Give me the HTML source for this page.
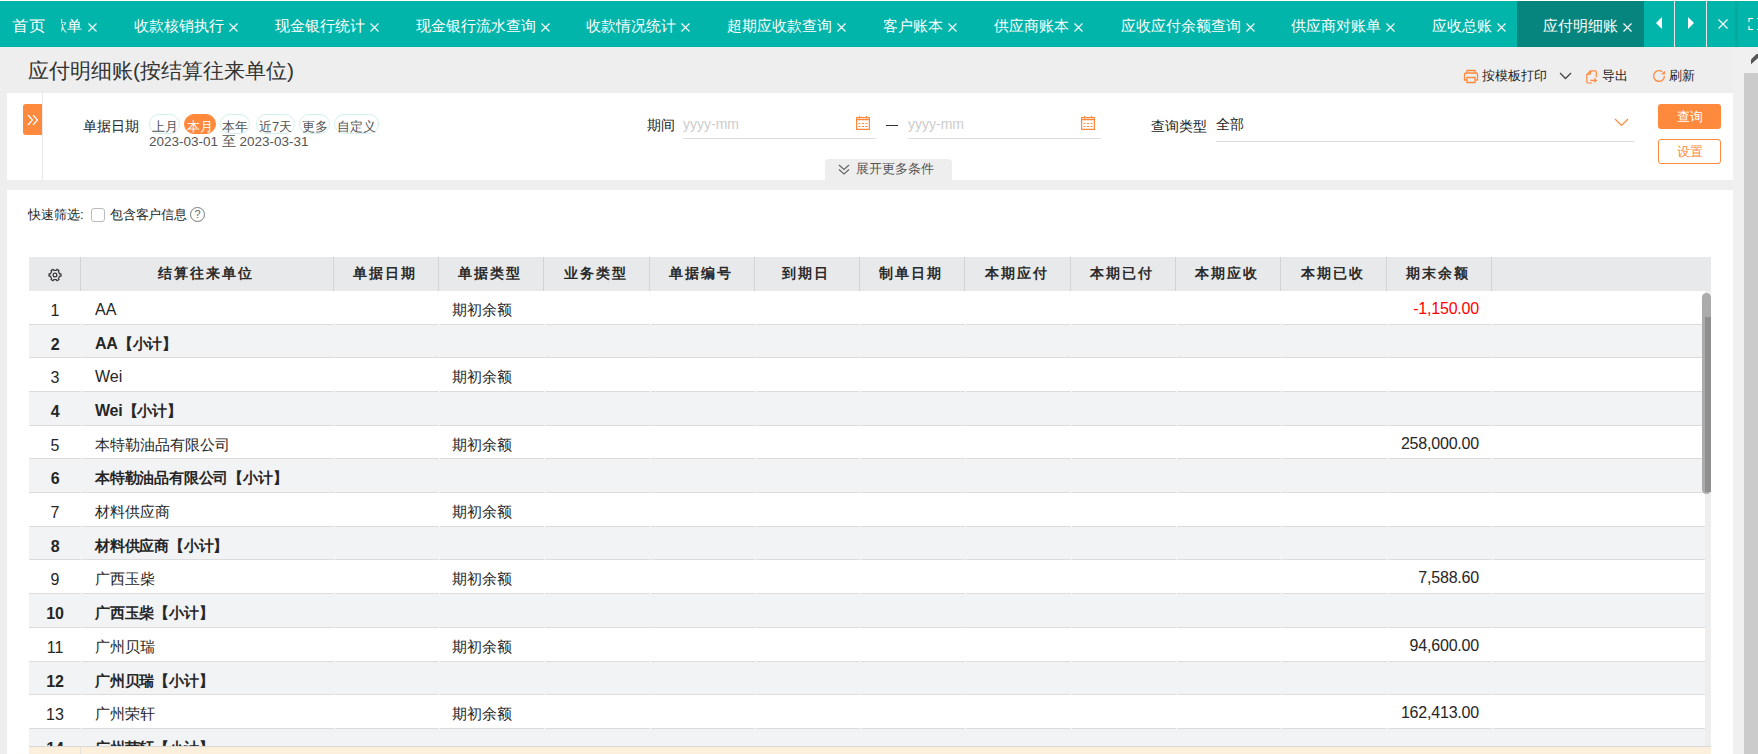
<!DOCTYPE html>
<html><head><meta charset="utf-8">
<style>
*{box-sizing:border-box;margin:0;padding:0}
html,body{width:1758px;height:754px;overflow:hidden;background:#eeeeee;font-family:"Liberation Sans",sans-serif;color:#333}
div,span{position:absolute;white-space:nowrap}
svg{display:block}
#tabs{left:0;top:0;width:1758px;height:47px;background:#01b5ab;border-top:1px solid #ffffff}
.t{top:1px;height:47px;line-height:47px;color:#fff;font-size:15px}
.x{top:21.5px;width:9px;height:9px;line-height:0}
#title{left:28px;top:57px;font-size:21px;color:#333}
.panel{background:#fff}
.l13{font-size:13px;color:#222;line-height:16px}
.l14{font-size:14px;color:#222;line-height:17px}
.pill{top:114px;height:20px;border:1px solid #d3f0ee;border-radius:10px;font-size:13px;line-height:23px;color:#555;text-align:center}
.th{height:34px;line-height:32px;font-size:14px;font-weight:bold;letter-spacing:2px;text-align:center;color:#2a2a2a}
.row{left:0;width:1676px;height:33.67px}
.td{top:0;line-height:38px;font-size:15px;color:#262626;border-bottom:1px solid #dcdcdc}
</style></head><body>
<div id="tabs">
<div style="left:1517px;top:0;width:127px;height:46px;background:#05857e"></div>
<div class="t" style="left:12px;transform:scaleX(1.1);transform-origin:0 0">首页</div>
<div class="t" style="left:134px">收款核销执行</div>
<div class="x" style="left:228.5px"><svg width="9" height="9" viewBox="0 0 9 9" style="display:block"><path d="M0.5 0.5L8.5 8.5M8.5 0.5L0.5 8.5" stroke="#fff" stroke-width="1.1" fill="none"/></svg></div>
<div class="t" style="left:275px">现金银行统计</div>
<div class="x" style="left:369.5px"><svg width="9" height="9" viewBox="0 0 9 9" style="display:block"><path d="M0.5 0.5L8.5 8.5M8.5 0.5L0.5 8.5" stroke="#fff" stroke-width="1.1" fill="none"/></svg></div>
<div class="t" style="left:416px">现金银行流水查询</div>
<div class="x" style="left:540.5px"><svg width="9" height="9" viewBox="0 0 9 9" style="display:block"><path d="M0.5 0.5L8.5 8.5M8.5 0.5L0.5 8.5" stroke="#fff" stroke-width="1.1" fill="none"/></svg></div>
<div class="t" style="left:586px">收款情况统计</div>
<div class="x" style="left:680.5px"><svg width="9" height="9" viewBox="0 0 9 9" style="display:block"><path d="M0.5 0.5L8.5 8.5M8.5 0.5L0.5 8.5" stroke="#fff" stroke-width="1.1" fill="none"/></svg></div>
<div class="t" style="left:727px">超期应收款查询</div>
<div class="x" style="left:836.5px"><svg width="9" height="9" viewBox="0 0 9 9" style="display:block"><path d="M0.5 0.5L8.5 8.5M8.5 0.5L0.5 8.5" stroke="#fff" stroke-width="1.1" fill="none"/></svg></div>
<div class="t" style="left:883px">客户账本</div>
<div class="x" style="left:947.5px"><svg width="9" height="9" viewBox="0 0 9 9" style="display:block"><path d="M0.5 0.5L8.5 8.5M8.5 0.5L0.5 8.5" stroke="#fff" stroke-width="1.1" fill="none"/></svg></div>
<div class="t" style="left:994px">供应商账本</div>
<div class="x" style="left:1073.5px"><svg width="9" height="9" viewBox="0 0 9 9" style="display:block"><path d="M0.5 0.5L8.5 8.5M8.5 0.5L0.5 8.5" stroke="#fff" stroke-width="1.1" fill="none"/></svg></div>
<div class="t" style="left:1121px">应收应付余额查询</div>
<div class="x" style="left:1245.5px"><svg width="9" height="9" viewBox="0 0 9 9" style="display:block"><path d="M0.5 0.5L8.5 8.5M8.5 0.5L0.5 8.5" stroke="#fff" stroke-width="1.1" fill="none"/></svg></div>
<div class="t" style="left:1291px">供应商对账单</div>
<div class="x" style="left:1385.5px"><svg width="9" height="9" viewBox="0 0 9 9" style="display:block"><path d="M0.5 0.5L8.5 8.5M8.5 0.5L0.5 8.5" stroke="#fff" stroke-width="1.1" fill="none"/></svg></div>
<div class="t" style="left:1432px">应收总账</div>
<div class="x" style="left:1496.5px"><svg width="9" height="9" viewBox="0 0 9 9" style="display:block"><path d="M0.5 0.5L8.5 8.5M8.5 0.5L0.5 8.5" stroke="#fff" stroke-width="1.1" fill="none"/></svg></div>
<div class="t" style="left:1543px">应付明细账</div>
<div class="x" style="left:1622.5px"><svg width="9" height="9" viewBox="0 0 9 9" style="display:block"><path d="M0.5 0.5L8.5 8.5M8.5 0.5L0.5 8.5" stroke="#fff" stroke-width="1.1" fill="none"/></svg></div>
<div class="t" style="left:61px;width:25px;overflow:hidden"><span style="position:static;margin-left:-9px">款单</span></div>
<div class="x" style="left:87.5px"><svg width="9" height="9" viewBox="0 0 9 9" style="display:block"><path d="M0.5 0.5L8.5 8.5M8.5 0.5L0.5 8.5" stroke="#fff" stroke-width="1.1" fill="none"/></svg></div>
<div style="left:1674px;top:0;width:1px;height:46px;background:#e6e6e6"></div>
<div style="left:1706px;top:0;width:1px;height:46px;background:#e6e6e6"></div>
<div style="left:1735px;top:0;width:3px;height:46px;background:#04aaa0"></div>
<svg style="position:absolute;left:1655px;top:15px" width="8" height="14"><path d="M7 1L1 7L7 13Z" fill="#fff"/></svg>
<svg style="position:absolute;left:1687px;top:15px" width="8" height="14"><path d="M1 1L7 7L1 13Z" fill="#fff"/></svg>
<div style="left:1718px;top:18px;width:10px;height:10px"><svg width="10" height="10" viewBox="0 0 10 10" style="display:block"><path d="M0.5 0.5L9.5 9.5M9.5 0.5L0.5 9.5" stroke="#fff" stroke-width="1.2" fill="none"/></svg></div>
<svg style="position:absolute;left:1747.5px;top:16px" width="14" height="14"><path d="M1 5V1.5H5M1 9V12.5H5M13 5V1.5H9M13 9V12.5H9" stroke="#fff" stroke-width="1.1" fill="none"/></svg>
</div>
<div id="title">应付明细账(按结算往来单位)</div>
<svg style="position:absolute;left:1463px;top:69px" width="16" height="15" viewBox="0 0 16 15"><path d="M4 4V1.5H12V4M4 11H1.5V5.5Q1.5 4 3 4H13Q14.5 4 14.5 5.5V11H12M4 8.5H12V13.5H4Z" stroke="#ff8a3d" stroke-width="1.3" fill="none"/></svg>
<div class="l13" style="left:1482px;top:68px">按模板打印</div>
<svg style="position:absolute;left:1559px;top:72px" width="13" height="8"><path d="M1 1L6.5 6.5L12 1" stroke="#444" stroke-width="1.3" fill="none"/></svg>
<svg style="position:absolute;left:1585px;top:68.5px" width="14" height="16" viewBox="0 0 14 16"><path d="M7 14H3.1Q1.8 14 1.8 12.7V5.5L5.5 1.8H10Q11.3 1.8 11.3 3.1V8.3M1.8 5.5H4.3Q5.5 5.5 5.5 4.3V1.8" stroke="#ff8a3d" stroke-width="1.2" fill="none"/><path d="M5.3 11.4H11.3M9.3 9.4L11.3 11.4L9.3 13.4" stroke="#ff8a3d" stroke-width="1.2" fill="none"/></svg>
<div class="l13" style="left:1602px;top:68px">导出</div>
<svg style="position:absolute;left:1652px;top:69px" width="15" height="15" viewBox="0 0 15 15"><path d="M12.4 7A5.4 5.4 0 1 1 10.3 2.7" stroke="#ff8a3d" stroke-width="1.3" fill="none"/><path d="M13.2 1.8L9.2 4.9L12.7 5.7Z" fill="#ff8a3d"/></svg>
<div class="l13" style="left:1669px;top:68px">刷新</div>
<div class="panel" style="left:7px;top:93px;width:1726px;height:87px"></div>
<div style="left:42px;top:93px;width:1px;height:87px;background:#e8e8e8"></div>
<div style="left:23px;top:104px;width:19px;height:31px;background:#ff8a3d;border-radius:3px 0 0 3px"></div>
<svg style="position:absolute;left:27px;top:114px" width="12" height="12"><path d="M1 1L5.5 6L1 11M6 1L10.5 6L6 11" stroke="#fff" stroke-width="1.2" fill="none"/></svg>
<div class="l14" style="left:83px;top:118px">单据日期</div>
<div class="pill" style="left:149px;width:31px">上月</div>
<div class="pill" style="left:184px;width:32px;background:#ff8a3d;border-color:#ff8a3d;color:#fff">本月</div>
<div class="pill" style="left:220px;width:30px">本年</div>
<div class="pill" style="left:256px;width:39px">近7天</div>
<div class="pill" style="left:299px;width:31px">更多</div>
<div class="pill" style="left:334px;width:45px">自定义</div>
<div style="left:149px;top:134px;font-size:13.5px;color:#555;line-height:16px">2023-03-01 至 2023-03-31</div>
<div class="l14" style="left:647px;top:117px">期间</div>
<div style="left:683px;top:138px;width:193px;height:1px;background:#dddddd"></div>
<div style="left:683px;top:116px;font-size:14px;color:#cccccc;line-height:17px">yyyy-mm</div>
<svg style="position:absolute;left:855px;top:115px" width="16" height="16" viewBox="0 0 16 16"><path d="M1.6 2.6H14.4V14.4H1.6ZM1.6 4.6H14.4" stroke="#ff8a3d" stroke-width="1.2" fill="none"/><path d="M4.5 1V3.5M11.5 1V3.5M7 2.6H9" stroke="#ff8a3d" stroke-width="1.2"/><path d="M3.5 8.5H5.5M7 8.5H9M10.5 8.5H12.5M3.5 11.5H5.5M7 11.5H9M10.5 11.5H12.5" stroke="#ff8a3d" stroke-width="1.1"/></svg>
<div style="left:908px;top:138px;width:193px;height:1px;background:#dddddd"></div>
<div style="left:908px;top:116px;font-size:14px;color:#cccccc;line-height:17px">yyyy-mm</div>
<svg style="position:absolute;left:1080px;top:115px" width="16" height="16" viewBox="0 0 16 16"><path d="M1.6 2.6H14.4V14.4H1.6ZM1.6 4.6H14.4" stroke="#ff8a3d" stroke-width="1.2" fill="none"/><path d="M4.5 1V3.5M11.5 1V3.5M7 2.6H9" stroke="#ff8a3d" stroke-width="1.2"/><path d="M3.5 8.5H5.5M7 8.5H9M10.5 8.5H12.5M3.5 11.5H5.5M7 11.5H9M10.5 11.5H12.5" stroke="#ff8a3d" stroke-width="1.1"/></svg>
<div style="left:886px;top:125px;width:12px;height:1px;background:#333"></div>
<div class="l14" style="left:1151px;top:118px">查询类型</div>
<div class="l14" style="left:1216px;top:116px;color:#222">全部</div>
<div style="left:1216px;top:141px;width:418px;height:1px;background:#dddddd"></div>
<svg style="position:absolute;left:1614px;top:118px" width="15" height="9"><path d="M1 1L7.5 7.5L14 1" stroke="#ff8a3d" stroke-width="1.2" fill="none"/></svg>
<div style="left:1658px;top:104px;width:63px;height:25px;background:#ff8a3d;border-radius:3px;color:#fff;font-size:13px;line-height:25px;text-align:center">查询</div>
<div style="left:1658px;top:139px;width:63px;height:25px;border:1px solid #ff8a3d;border-radius:3px;color:#ff8a3d;font-size:13px;line-height:23px;text-align:center;background:#fff">设置</div>
<div style="left:825px;top:159px;width:127px;height:21px;background:#eeeeee;border-radius:4px 4px 0 0"></div>
<svg style="position:absolute;left:838px;top:163.5px" width="12" height="11"><path d="M1 1L6 5.5L11 1M1 5.5L6 10L11 5.5" stroke="#666" stroke-width="1.2" fill="none"/></svg>
<div style="left:856px;top:161px;font-size:13px;color:#555;line-height:16px">展开更多条件</div>
<div class="panel" style="left:7px;top:190px;width:1726px;height:564px"></div>
<div class="l13" style="left:28px;top:207px">快速筛选:</div>
<div style="left:91px;top:208px;width:14px;height:14px;border:1px solid #bcbcbc;border-radius:3px;background:#fff"></div>
<div class="l13" style="left:110px;top:207px;letter-spacing:-0.2px">包含客户信息</div>
<div style="left:190px;top:207px;width:15px;height:15px;border:1px solid #777;border-radius:50%;font-size:11px;line-height:13px;text-align:center;color:#666">?</div>
<div style="left:29px;top:257px;width:1682px;height:34px;background:#e8e9eb"></div>
<div style="left:80px;top:257px;width:1px;height:34px;background:#d3d4d6"></div>
<div class="th" style="left:81px;top:257px;width:253px;padding-right:3px">结算往来单位</div>
<div style="left:333px;top:257px;width:1px;height:34px;background:#d3d4d6"></div>
<div class="th" style="left:334px;top:257px;width:105px;padding-right:3px">单据日期</div>
<div style="left:438px;top:257px;width:1px;height:34px;background:#d3d4d6"></div>
<div class="th" style="left:439px;top:257px;width:105px;padding-right:3px">单据类型</div>
<div style="left:543px;top:257px;width:1px;height:34px;background:#d3d4d6"></div>
<div class="th" style="left:544px;top:257px;width:106px;padding-right:3px">业务类型</div>
<div style="left:649px;top:257px;width:1px;height:34px;background:#d3d4d6"></div>
<div class="th" style="left:650px;top:257px;width:105px;padding-right:3px">单据编号</div>
<div style="left:754px;top:257px;width:1px;height:34px;background:#d3d4d6"></div>
<div class="th" style="left:755px;top:257px;width:105px;padding-right:3px">到期日</div>
<div style="left:859px;top:257px;width:1px;height:34px;background:#d3d4d6"></div>
<div class="th" style="left:860px;top:257px;width:105px;padding-right:3px">制单日期</div>
<div style="left:964px;top:257px;width:1px;height:34px;background:#d3d4d6"></div>
<div class="th" style="left:965px;top:257px;width:106px;padding-right:3px">本期应付</div>
<div style="left:1070px;top:257px;width:1px;height:34px;background:#d3d4d6"></div>
<div class="th" style="left:1071px;top:257px;width:105px;padding-right:3px">本期已付</div>
<div style="left:1175px;top:257px;width:1px;height:34px;background:#d3d4d6"></div>
<div class="th" style="left:1176px;top:257px;width:105px;padding-right:3px">本期应收</div>
<div style="left:1280px;top:257px;width:1px;height:34px;background:#d3d4d6"></div>
<div class="th" style="left:1281px;top:257px;width:106px;padding-right:3px">本期已收</div>
<div style="left:1386px;top:257px;width:1px;height:34px;background:#d3d4d6"></div>
<div class="th" style="left:1387px;top:257px;width:105px;padding-right:3px">期末余额</div>
<div style="left:1491px;top:257px;width:1px;height:34px;background:#d3d4d6"></div>
<svg style="position:absolute;left:46.5px;top:267px" width="16" height="16" viewBox="0 0 16 16"><path d="M12.07 10.35 L12.54 9.22 L13.99 9.16 L13.99 6.84 L12.54 6.78 L12.07 5.65 L11.32 4.68 L12.00 3.40 L9.99 2.23 L9.22 3.46 L8.00 3.30 L6.78 3.46 L6.01 2.23 L4.00 3.40 L4.68 4.68 L3.93 5.65 L3.46 6.78 L2.01 6.84 L2.01 9.16 L3.46 9.22 L3.93 10.35 L4.68 11.32 L4.00 12.60 L6.01 13.77 L6.78 12.54 L8.00 12.70 L9.22 12.54 L9.99 13.77 L12.00 12.60 L11.32 11.32Z" stroke="#333" stroke-width="1.2" fill="none" stroke-linejoin="round"/><circle cx="8" cy="8" r="1.9" stroke="#333" stroke-width="1.2" fill="none"/></svg>
<div style="left:29px;top:291px;width:1676px;height:463px;overflow:hidden">
<div style="left:0;top:0px;width:1676px;height:34px;background:#ffffff;font-weight:normal">
<div class="td" style="left:0px;width:52px;height:34px;background:#ffffff;text-align:center;font-size:16px;line-height:39px">1</div>
<div class="td" style="left:53px;width:252px;height:34px;background:#ffffff;padding-left:13px"><span style="position:static;font-size:16px">AA</span></div>
<div class="td" style="left:306px;width:104px;height:34px;background:#ffffff;"></div>
<div class="td" style="left:411px;width:104px;height:34px;background:#ffffff;padding-left:12px">期初余额</div>
<div class="td" style="left:516px;width:105px;height:34px;background:#ffffff;"></div>
<div class="td" style="left:622px;width:104px;height:34px;background:#ffffff;"></div>
<div class="td" style="left:727px;width:104px;height:34px;background:#ffffff;"></div>
<div class="td" style="left:832px;width:104px;height:34px;background:#ffffff;"></div>
<div class="td" style="left:937px;width:105px;height:34px;background:#ffffff;"></div>
<div class="td" style="left:1043px;width:104px;height:34px;background:#ffffff;"></div>
<div class="td" style="left:1148px;width:104px;height:34px;background:#ffffff;"></div>
<div class="td" style="left:1253px;width:105px;height:34px;background:#ffffff;"></div>
<div class="td" style="left:1359px;width:104px;height:34px;background:#ffffff;text-align:right;padding-right:13px;color:#ff0000"><span style="position:relative;top:-1.5px;font-size:16px;letter-spacing:-0.2px">-1,150.00</span></div>
<div class="td" style="left:1464px;width:212px;height:34px;background:#ffffff;"></div>
</div>
<div style="left:0;top:34px;width:1676px;height:33px;background:#f2f3f5;font-weight:bold;letter-spacing:-0.2px">
<div class="td" style="left:0px;width:52px;height:33px;background:#f2f3f5;text-align:center;font-size:16px;line-height:39px">2</div>
<div class="td" style="left:53px;width:252px;height:33px;background:#f2f3f5;padding-left:13px"><span style="position:static;font-size:16px">AA</span>【小计】</div>
<div class="td" style="left:306px;width:104px;height:33px;background:#f2f3f5;"></div>
<div class="td" style="left:411px;width:104px;height:33px;background:#f2f3f5;padding-left:12px"></div>
<div class="td" style="left:516px;width:105px;height:33px;background:#f2f3f5;"></div>
<div class="td" style="left:622px;width:104px;height:33px;background:#f2f3f5;"></div>
<div class="td" style="left:727px;width:104px;height:33px;background:#f2f3f5;"></div>
<div class="td" style="left:832px;width:104px;height:33px;background:#f2f3f5;"></div>
<div class="td" style="left:937px;width:105px;height:33px;background:#f2f3f5;"></div>
<div class="td" style="left:1043px;width:104px;height:33px;background:#f2f3f5;"></div>
<div class="td" style="left:1148px;width:104px;height:33px;background:#f2f3f5;"></div>
<div class="td" style="left:1253px;width:105px;height:33px;background:#f2f3f5;"></div>
<div class="td" style="left:1359px;width:104px;height:33px;background:#f2f3f5;text-align:right;padding-right:13px"></div>
<div class="td" style="left:1464px;width:212px;height:33px;background:#f2f3f5;"></div>
</div>
<div style="left:0;top:67px;width:1676px;height:34px;background:#ffffff;font-weight:normal">
<div class="td" style="left:0px;width:52px;height:34px;background:#ffffff;text-align:center;font-size:16px;line-height:39px">3</div>
<div class="td" style="left:53px;width:252px;height:34px;background:#ffffff;padding-left:13px"><span style="position:static;font-size:16px">Wei</span></div>
<div class="td" style="left:306px;width:104px;height:34px;background:#ffffff;"></div>
<div class="td" style="left:411px;width:104px;height:34px;background:#ffffff;padding-left:12px">期初余额</div>
<div class="td" style="left:516px;width:105px;height:34px;background:#ffffff;"></div>
<div class="td" style="left:622px;width:104px;height:34px;background:#ffffff;"></div>
<div class="td" style="left:727px;width:104px;height:34px;background:#ffffff;"></div>
<div class="td" style="left:832px;width:104px;height:34px;background:#ffffff;"></div>
<div class="td" style="left:937px;width:105px;height:34px;background:#ffffff;"></div>
<div class="td" style="left:1043px;width:104px;height:34px;background:#ffffff;"></div>
<div class="td" style="left:1148px;width:104px;height:34px;background:#ffffff;"></div>
<div class="td" style="left:1253px;width:105px;height:34px;background:#ffffff;"></div>
<div class="td" style="left:1359px;width:104px;height:34px;background:#ffffff;text-align:right;padding-right:13px"></div>
<div class="td" style="left:1464px;width:212px;height:34px;background:#ffffff;"></div>
</div>
<div style="left:0;top:101px;width:1676px;height:34px;background:#f2f3f5;font-weight:bold;letter-spacing:-0.2px">
<div class="td" style="left:0px;width:52px;height:34px;background:#f2f3f5;text-align:center;font-size:16px;line-height:39px">4</div>
<div class="td" style="left:53px;width:252px;height:34px;background:#f2f3f5;padding-left:13px"><span style="position:static;font-size:16px">Wei</span>【小计】</div>
<div class="td" style="left:306px;width:104px;height:34px;background:#f2f3f5;"></div>
<div class="td" style="left:411px;width:104px;height:34px;background:#f2f3f5;padding-left:12px"></div>
<div class="td" style="left:516px;width:105px;height:34px;background:#f2f3f5;"></div>
<div class="td" style="left:622px;width:104px;height:34px;background:#f2f3f5;"></div>
<div class="td" style="left:727px;width:104px;height:34px;background:#f2f3f5;"></div>
<div class="td" style="left:832px;width:104px;height:34px;background:#f2f3f5;"></div>
<div class="td" style="left:937px;width:105px;height:34px;background:#f2f3f5;"></div>
<div class="td" style="left:1043px;width:104px;height:34px;background:#f2f3f5;"></div>
<div class="td" style="left:1148px;width:104px;height:34px;background:#f2f3f5;"></div>
<div class="td" style="left:1253px;width:105px;height:34px;background:#f2f3f5;"></div>
<div class="td" style="left:1359px;width:104px;height:34px;background:#f2f3f5;text-align:right;padding-right:13px"></div>
<div class="td" style="left:1464px;width:212px;height:34px;background:#f2f3f5;"></div>
</div>
<div style="left:0;top:135px;width:1676px;height:33px;background:#ffffff;font-weight:normal">
<div class="td" style="left:0px;width:52px;height:33px;background:#ffffff;text-align:center;font-size:16px;line-height:39px">5</div>
<div class="td" style="left:53px;width:252px;height:33px;background:#ffffff;padding-left:13px">本特勒油品有限公司</div>
<div class="td" style="left:306px;width:104px;height:33px;background:#ffffff;"></div>
<div class="td" style="left:411px;width:104px;height:33px;background:#ffffff;padding-left:12px">期初余额</div>
<div class="td" style="left:516px;width:105px;height:33px;background:#ffffff;"></div>
<div class="td" style="left:622px;width:104px;height:33px;background:#ffffff;"></div>
<div class="td" style="left:727px;width:104px;height:33px;background:#ffffff;"></div>
<div class="td" style="left:832px;width:104px;height:33px;background:#ffffff;"></div>
<div class="td" style="left:937px;width:105px;height:33px;background:#ffffff;"></div>
<div class="td" style="left:1043px;width:104px;height:33px;background:#ffffff;"></div>
<div class="td" style="left:1148px;width:104px;height:33px;background:#ffffff;"></div>
<div class="td" style="left:1253px;width:105px;height:33px;background:#ffffff;"></div>
<div class="td" style="left:1359px;width:104px;height:33px;background:#ffffff;text-align:right;padding-right:13px"><span style="position:relative;top:-1.5px;font-size:16px;letter-spacing:-0.2px">258,000.00</span></div>
<div class="td" style="left:1464px;width:212px;height:33px;background:#ffffff;"></div>
</div>
<div style="left:0;top:168px;width:1676px;height:34px;background:#f2f3f5;font-weight:bold;letter-spacing:-0.2px">
<div class="td" style="left:0px;width:52px;height:34px;background:#f2f3f5;text-align:center;font-size:16px;line-height:39px">6</div>
<div class="td" style="left:53px;width:252px;height:34px;background:#f2f3f5;padding-left:13px">本特勒油品有限公司【小计】</div>
<div class="td" style="left:306px;width:104px;height:34px;background:#f2f3f5;"></div>
<div class="td" style="left:411px;width:104px;height:34px;background:#f2f3f5;padding-left:12px"></div>
<div class="td" style="left:516px;width:105px;height:34px;background:#f2f3f5;"></div>
<div class="td" style="left:622px;width:104px;height:34px;background:#f2f3f5;"></div>
<div class="td" style="left:727px;width:104px;height:34px;background:#f2f3f5;"></div>
<div class="td" style="left:832px;width:104px;height:34px;background:#f2f3f5;"></div>
<div class="td" style="left:937px;width:105px;height:34px;background:#f2f3f5;"></div>
<div class="td" style="left:1043px;width:104px;height:34px;background:#f2f3f5;"></div>
<div class="td" style="left:1148px;width:104px;height:34px;background:#f2f3f5;"></div>
<div class="td" style="left:1253px;width:105px;height:34px;background:#f2f3f5;"></div>
<div class="td" style="left:1359px;width:104px;height:34px;background:#f2f3f5;text-align:right;padding-right:13px"></div>
<div class="td" style="left:1464px;width:212px;height:34px;background:#f2f3f5;"></div>
</div>
<div style="left:0;top:202px;width:1676px;height:34px;background:#ffffff;font-weight:normal">
<div class="td" style="left:0px;width:52px;height:34px;background:#ffffff;text-align:center;font-size:16px;line-height:39px">7</div>
<div class="td" style="left:53px;width:252px;height:34px;background:#ffffff;padding-left:13px">材料供应商</div>
<div class="td" style="left:306px;width:104px;height:34px;background:#ffffff;"></div>
<div class="td" style="left:411px;width:104px;height:34px;background:#ffffff;padding-left:12px">期初余额</div>
<div class="td" style="left:516px;width:105px;height:34px;background:#ffffff;"></div>
<div class="td" style="left:622px;width:104px;height:34px;background:#ffffff;"></div>
<div class="td" style="left:727px;width:104px;height:34px;background:#ffffff;"></div>
<div class="td" style="left:832px;width:104px;height:34px;background:#ffffff;"></div>
<div class="td" style="left:937px;width:105px;height:34px;background:#ffffff;"></div>
<div class="td" style="left:1043px;width:104px;height:34px;background:#ffffff;"></div>
<div class="td" style="left:1148px;width:104px;height:34px;background:#ffffff;"></div>
<div class="td" style="left:1253px;width:105px;height:34px;background:#ffffff;"></div>
<div class="td" style="left:1359px;width:104px;height:34px;background:#ffffff;text-align:right;padding-right:13px"></div>
<div class="td" style="left:1464px;width:212px;height:34px;background:#ffffff;"></div>
</div>
<div style="left:0;top:236px;width:1676px;height:33px;background:#f2f3f5;font-weight:bold;letter-spacing:-0.2px">
<div class="td" style="left:0px;width:52px;height:33px;background:#f2f3f5;text-align:center;font-size:16px;line-height:39px">8</div>
<div class="td" style="left:53px;width:252px;height:33px;background:#f2f3f5;padding-left:13px">材料供应商【小计】</div>
<div class="td" style="left:306px;width:104px;height:33px;background:#f2f3f5;"></div>
<div class="td" style="left:411px;width:104px;height:33px;background:#f2f3f5;padding-left:12px"></div>
<div class="td" style="left:516px;width:105px;height:33px;background:#f2f3f5;"></div>
<div class="td" style="left:622px;width:104px;height:33px;background:#f2f3f5;"></div>
<div class="td" style="left:727px;width:104px;height:33px;background:#f2f3f5;"></div>
<div class="td" style="left:832px;width:104px;height:33px;background:#f2f3f5;"></div>
<div class="td" style="left:937px;width:105px;height:33px;background:#f2f3f5;"></div>
<div class="td" style="left:1043px;width:104px;height:33px;background:#f2f3f5;"></div>
<div class="td" style="left:1148px;width:104px;height:33px;background:#f2f3f5;"></div>
<div class="td" style="left:1253px;width:105px;height:33px;background:#f2f3f5;"></div>
<div class="td" style="left:1359px;width:104px;height:33px;background:#f2f3f5;text-align:right;padding-right:13px"></div>
<div class="td" style="left:1464px;width:212px;height:33px;background:#f2f3f5;"></div>
</div>
<div style="left:0;top:269px;width:1676px;height:34px;background:#ffffff;font-weight:normal">
<div class="td" style="left:0px;width:52px;height:34px;background:#ffffff;text-align:center;font-size:16px;line-height:39px">9</div>
<div class="td" style="left:53px;width:252px;height:34px;background:#ffffff;padding-left:13px">广西玉柴</div>
<div class="td" style="left:306px;width:104px;height:34px;background:#ffffff;"></div>
<div class="td" style="left:411px;width:104px;height:34px;background:#ffffff;padding-left:12px">期初余额</div>
<div class="td" style="left:516px;width:105px;height:34px;background:#ffffff;"></div>
<div class="td" style="left:622px;width:104px;height:34px;background:#ffffff;"></div>
<div class="td" style="left:727px;width:104px;height:34px;background:#ffffff;"></div>
<div class="td" style="left:832px;width:104px;height:34px;background:#ffffff;"></div>
<div class="td" style="left:937px;width:105px;height:34px;background:#ffffff;"></div>
<div class="td" style="left:1043px;width:104px;height:34px;background:#ffffff;"></div>
<div class="td" style="left:1148px;width:104px;height:34px;background:#ffffff;"></div>
<div class="td" style="left:1253px;width:105px;height:34px;background:#ffffff;"></div>
<div class="td" style="left:1359px;width:104px;height:34px;background:#ffffff;text-align:right;padding-right:13px"><span style="position:relative;top:-1.5px;font-size:16px;letter-spacing:-0.2px">7,588.60</span></div>
<div class="td" style="left:1464px;width:212px;height:34px;background:#ffffff;"></div>
</div>
<div style="left:0;top:303px;width:1676px;height:34px;background:#f2f3f5;font-weight:bold;letter-spacing:-0.2px">
<div class="td" style="left:0px;width:52px;height:34px;background:#f2f3f5;text-align:center;font-size:16px;line-height:39px">10</div>
<div class="td" style="left:53px;width:252px;height:34px;background:#f2f3f5;padding-left:13px">广西玉柴【小计】</div>
<div class="td" style="left:306px;width:104px;height:34px;background:#f2f3f5;"></div>
<div class="td" style="left:411px;width:104px;height:34px;background:#f2f3f5;padding-left:12px"></div>
<div class="td" style="left:516px;width:105px;height:34px;background:#f2f3f5;"></div>
<div class="td" style="left:622px;width:104px;height:34px;background:#f2f3f5;"></div>
<div class="td" style="left:727px;width:104px;height:34px;background:#f2f3f5;"></div>
<div class="td" style="left:832px;width:104px;height:34px;background:#f2f3f5;"></div>
<div class="td" style="left:937px;width:105px;height:34px;background:#f2f3f5;"></div>
<div class="td" style="left:1043px;width:104px;height:34px;background:#f2f3f5;"></div>
<div class="td" style="left:1148px;width:104px;height:34px;background:#f2f3f5;"></div>
<div class="td" style="left:1253px;width:105px;height:34px;background:#f2f3f5;"></div>
<div class="td" style="left:1359px;width:104px;height:34px;background:#f2f3f5;text-align:right;padding-right:13px"></div>
<div class="td" style="left:1464px;width:212px;height:34px;background:#f2f3f5;"></div>
</div>
<div style="left:0;top:337px;width:1676px;height:34px;background:#ffffff;font-weight:normal">
<div class="td" style="left:0px;width:52px;height:34px;background:#ffffff;text-align:center;font-size:16px;line-height:39px">11</div>
<div class="td" style="left:53px;width:252px;height:34px;background:#ffffff;padding-left:13px">广州贝瑞</div>
<div class="td" style="left:306px;width:104px;height:34px;background:#ffffff;"></div>
<div class="td" style="left:411px;width:104px;height:34px;background:#ffffff;padding-left:12px">期初余额</div>
<div class="td" style="left:516px;width:105px;height:34px;background:#ffffff;"></div>
<div class="td" style="left:622px;width:104px;height:34px;background:#ffffff;"></div>
<div class="td" style="left:727px;width:104px;height:34px;background:#ffffff;"></div>
<div class="td" style="left:832px;width:104px;height:34px;background:#ffffff;"></div>
<div class="td" style="left:937px;width:105px;height:34px;background:#ffffff;"></div>
<div class="td" style="left:1043px;width:104px;height:34px;background:#ffffff;"></div>
<div class="td" style="left:1148px;width:104px;height:34px;background:#ffffff;"></div>
<div class="td" style="left:1253px;width:105px;height:34px;background:#ffffff;"></div>
<div class="td" style="left:1359px;width:104px;height:34px;background:#ffffff;text-align:right;padding-right:13px"><span style="position:relative;top:-1.5px;font-size:16px;letter-spacing:-0.2px">94,600.00</span></div>
<div class="td" style="left:1464px;width:212px;height:34px;background:#ffffff;"></div>
</div>
<div style="left:0;top:371px;width:1676px;height:33px;background:#f2f3f5;font-weight:bold;letter-spacing:-0.2px">
<div class="td" style="left:0px;width:52px;height:33px;background:#f2f3f5;text-align:center;font-size:16px;line-height:39px">12</div>
<div class="td" style="left:53px;width:252px;height:33px;background:#f2f3f5;padding-left:13px">广州贝瑞【小计】</div>
<div class="td" style="left:306px;width:104px;height:33px;background:#f2f3f5;"></div>
<div class="td" style="left:411px;width:104px;height:33px;background:#f2f3f5;padding-left:12px"></div>
<div class="td" style="left:516px;width:105px;height:33px;background:#f2f3f5;"></div>
<div class="td" style="left:622px;width:104px;height:33px;background:#f2f3f5;"></div>
<div class="td" style="left:727px;width:104px;height:33px;background:#f2f3f5;"></div>
<div class="td" style="left:832px;width:104px;height:33px;background:#f2f3f5;"></div>
<div class="td" style="left:937px;width:105px;height:33px;background:#f2f3f5;"></div>
<div class="td" style="left:1043px;width:104px;height:33px;background:#f2f3f5;"></div>
<div class="td" style="left:1148px;width:104px;height:33px;background:#f2f3f5;"></div>
<div class="td" style="left:1253px;width:105px;height:33px;background:#f2f3f5;"></div>
<div class="td" style="left:1359px;width:104px;height:33px;background:#f2f3f5;text-align:right;padding-right:13px"></div>
<div class="td" style="left:1464px;width:212px;height:33px;background:#f2f3f5;"></div>
</div>
<div style="left:0;top:404px;width:1676px;height:34px;background:#ffffff;font-weight:normal">
<div class="td" style="left:0px;width:52px;height:34px;background:#ffffff;text-align:center;font-size:16px;line-height:39px">13</div>
<div class="td" style="left:53px;width:252px;height:34px;background:#ffffff;padding-left:13px">广州荣轩</div>
<div class="td" style="left:306px;width:104px;height:34px;background:#ffffff;"></div>
<div class="td" style="left:411px;width:104px;height:34px;background:#ffffff;padding-left:12px">期初余额</div>
<div class="td" style="left:516px;width:105px;height:34px;background:#ffffff;"></div>
<div class="td" style="left:622px;width:104px;height:34px;background:#ffffff;"></div>
<div class="td" style="left:727px;width:104px;height:34px;background:#ffffff;"></div>
<div class="td" style="left:832px;width:104px;height:34px;background:#ffffff;"></div>
<div class="td" style="left:937px;width:105px;height:34px;background:#ffffff;"></div>
<div class="td" style="left:1043px;width:104px;height:34px;background:#ffffff;"></div>
<div class="td" style="left:1148px;width:104px;height:34px;background:#ffffff;"></div>
<div class="td" style="left:1253px;width:105px;height:34px;background:#ffffff;"></div>
<div class="td" style="left:1359px;width:104px;height:34px;background:#ffffff;text-align:right;padding-right:13px"><span style="position:relative;top:-1.5px;font-size:16px;letter-spacing:-0.2px">162,413.00</span></div>
<div class="td" style="left:1464px;width:212px;height:34px;background:#ffffff;"></div>
</div>
<div style="left:0;top:438px;width:1676px;height:34px;background:#f2f3f5;font-weight:bold;letter-spacing:-0.2px">
<div class="td" style="left:0px;width:52px;height:34px;background:#f2f3f5;text-align:center;font-size:16px;line-height:39px">14</div>
<div class="td" style="left:53px;width:252px;height:34px;background:#f2f3f5;padding-left:13px">广州荣轩【小计】</div>
<div class="td" style="left:306px;width:104px;height:34px;background:#f2f3f5;"></div>
<div class="td" style="left:411px;width:104px;height:34px;background:#f2f3f5;padding-left:12px"></div>
<div class="td" style="left:516px;width:105px;height:34px;background:#f2f3f5;"></div>
<div class="td" style="left:622px;width:104px;height:34px;background:#f2f3f5;"></div>
<div class="td" style="left:727px;width:104px;height:34px;background:#f2f3f5;"></div>
<div class="td" style="left:832px;width:104px;height:34px;background:#f2f3f5;"></div>
<div class="td" style="left:937px;width:105px;height:34px;background:#f2f3f5;"></div>
<div class="td" style="left:1043px;width:104px;height:34px;background:#f2f3f5;"></div>
<div class="td" style="left:1148px;width:104px;height:34px;background:#f2f3f5;"></div>
<div class="td" style="left:1253px;width:105px;height:34px;background:#f2f3f5;"></div>
<div class="td" style="left:1359px;width:104px;height:34px;background:#f2f3f5;text-align:right;padding-right:13px"></div>
<div class="td" style="left:1464px;width:212px;height:34px;background:#f2f3f5;"></div>
</div>
</div>
<div style="left:1705px;top:291px;width:6px;height:463px;background:#eeeeee"></div>
<div style="left:1702px;top:293px;width:9px;height:201px;background:#ababab;border-radius:4.5px 4.5px 4.5px 4.5px"></div>
<div style="left:1705px;top:317px;width:6px;height:175px;background:#8f8f8f"></div>
<div style="left:29px;top:746px;width:1682px;height:8px;background:#fcefdc;border-top:1px solid #d8d8d8"></div>
<div style="left:80px;top:746px;width:1px;height:8px;background:#e5e0d8"></div>
<div style="left:1733px;top:47px;width:25px;height:707px;background:#f0f0f0"></div>
<div style="left:1744px;top:73px;width:14px;height:681px;background:#cbcbcb"></div>
<svg style="position:absolute;left:1750px;top:52px" width="8" height="14"><path d="M1 7.4L6.5 2L8 2L8 6L1 12.2Z" fill="#555"/></svg>
</body></html>
